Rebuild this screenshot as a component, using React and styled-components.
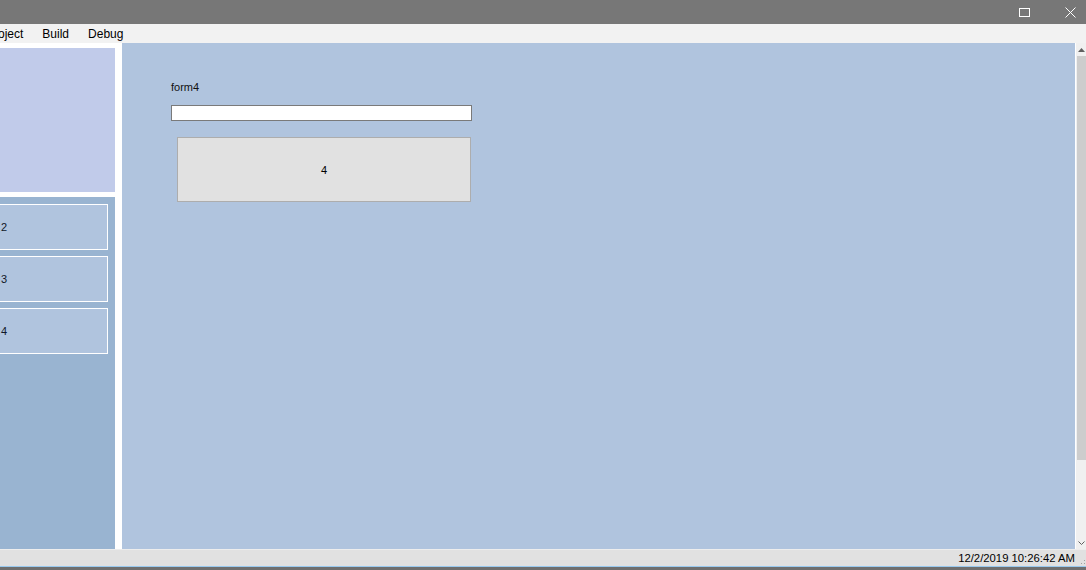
import React from 'react';
import styled, { createGlobalStyle } from 'styled-components';

const GlobalStyle = createGlobalStyle`
  html, body { margin: 0; padding: 0; background: #ffffff; overflow: hidden; }
  body { font-family: "Liberation Sans", Arial, sans-serif; }
`;

const Window = styled.div`
  width: 1086px;
  height: 570px;
  display: flex;
  flex-direction: column;
  overflow: hidden;
`;

const TitleBar = styled.div`
  height: 24px;
  flex: none;
  background: #777777;
  display: flex;
  justify-content: flex-end;
  align-items: center;
`;

const CaptionButton = styled.div`
  width: ${p => p.$w}px;
  height: 24px;
  display: flex;
  align-items: center;
  justify-content: center;
`;

const MenuBar = styled.div`
  height: 19px;
  flex: none;
  background: #f2f2f2;
  display: flex;
  align-items: center;
  gap: 19px;
  margin-left: -14px;
  font-size: 12px;
  color: #000;
`;

const MenuItem = styled.span`
  padding-top: 1px;
`;

const Body = styled.div`
  flex: 1;
  display: flex;
  background: #ffffff;
  min-height: 0;
`;

const Sidebar = styled.div`
  width: 115px;
  flex: none;
  padding-top: 5px;
  display: flex;
  flex-direction: column;
  gap: 5px;
`;

const LogoPanel = styled.div`
  height: 144px;
  flex: none;
  background: #c1cbea;
`;

const NavPanel = styled.div`
  flex: 1;
  background: #99b4d1;
  padding: 7px 7px 0 0;
  display: flex;
  flex-direction: column;
  gap: 6px;
  overflow: hidden;
`;

const NavButton = styled.div`
  height: 44px;
  margin-left: -10px;
  padding-left: 10px;
  border: 1px solid #ffffff;
  background: #b0c4de;
  display: flex;
  align-items: center;
  font-size: 11px;
  color: #101828;
`;

const Main = styled.div`
  flex: 1;
  margin-left: 7px;
  background: #b0c4de;
  border-right: 1px solid #ffffff;
  padding: 38px 0 0 49px;
  display: flex;
  flex-direction: column;
  align-items: flex-start;
`;

const FieldLabel = styled.div`
  font-size: 11px;
  color: #111;
  height: 13px;
`;

const TextBox = styled.div`
  margin-top: 11px;
  width: 299px;
  height: 14px;
  background: #ffffff;
  border: 1px solid #7a7a7a;
`;

const ActionButton = styled.div`
  margin: 16px 0 0 6px;
  width: 292px;
  height: 63px;
  background: #e1e1e1;
  border: 1px solid #adadad;
  display: flex;
  align-items: center;
  justify-content: center;
  font-size: 11px;
  color: #000;
`;

const ScrollBar = styled.div`
  width: 10px;
  flex: none;
  background: #f0f0f0;
  display: flex;
  flex-direction: column;
  align-items: center;
`;

const ScrollArrow = styled.div`
  height: 13px;
  flex: none;
  display: flex;
  align-items: center;
  justify-content: center;
`;

const ScrollThumb = styled.div`
  width: 9px;
  height: 404px;
  background: #cdcdcd;
`;

const ScrollTrack = styled.div`
  flex: 1;
`;

const StatusBar = styled.div`
  height: 16px;
  flex: none;
  background: #e1e1e1;
  border-top: 1px solid #ededed;
  display: flex;
  justify-content: flex-end;
  align-items: center;
  font-size: 11.3px;
  color: #000;
`;

const StatusText = styled.span`
  margin-right: 3px;
`;

const Grip = styled.div`
  width: 8px;
  height: 16px;
  display: flex;
  align-items: flex-end;
`;

const BottomEdge = styled.div`
  height: 3px;
  flex: none;
  background: #6f6f6f;
  border-top: 1px solid #99c9ef;
`;

const App = () => {
  return (
    <Window>
      <GlobalStyle />
      <TitleBar>
        <CaptionButton $w={60}>
          <svg width="11" height="9" viewBox="0 0 11 9">
            <rect x="0.5" y="0.5" width="10" height="8" fill="none" stroke="#fff" strokeWidth="1" />
          </svg>
        </CaptionButton>
        <CaptionButton $w={32}>
          <svg width="11" height="11" viewBox="0 0 11 11">
            <path d="M0.5 0.5 L10.5 10.5 M10.5 0.5 L0.5 10.5" stroke="#fff" strokeWidth="1" />
          </svg>
        </CaptionButton>
      </TitleBar>
      <MenuBar>
        <MenuItem>Project</MenuItem>
        <MenuItem>Build</MenuItem>
        <MenuItem>Debug</MenuItem>
      </MenuBar>
      <Body>
        <Sidebar>
          <LogoPanel />
          <NavPanel>
            <NavButton>2</NavButton>
            <NavButton>3</NavButton>
            <NavButton>4</NavButton>
          </NavPanel>
        </Sidebar>
        <Main>
          <FieldLabel>form4</FieldLabel>
          <TextBox />
          <ActionButton>4</ActionButton>
        </Main>
        <ScrollBar>
          <ScrollArrow>
            <svg width="7" height="4" viewBox="0 0 7 4">
              <path d="M0 4 L3.5 0 L7 4 Z" fill="#606060" />
            </svg>
          </ScrollArrow>
          <ScrollThumb />
          <ScrollTrack />
          <ScrollArrow>
            <svg width="7" height="4" viewBox="0 0 7 4">
              <path d="M0.5 0.5 L3.5 3.5 L6.5 0.5" fill="none" stroke="#606060" strokeWidth="1" />
            </svg>
          </ScrollArrow>
        </ScrollBar>
      </Body>
      <StatusBar>
        <StatusText>12/2/2019 10:26:42 AM</StatusText>
        <Grip>
          <svg width="8" height="8" viewBox="0 0 8 8">
            <rect x="6" y="2" width="1" height="1" fill="#a0a0a0" />
            <rect x="3" y="5" width="1" height="1" fill="#a0a0a0" />
            <rect x="6" y="5" width="1" height="1" fill="#a0a0a0" />
          </svg>
        </Grip>
      </StatusBar>
      <BottomEdge />
    </Window>
  );
};

export default App;
